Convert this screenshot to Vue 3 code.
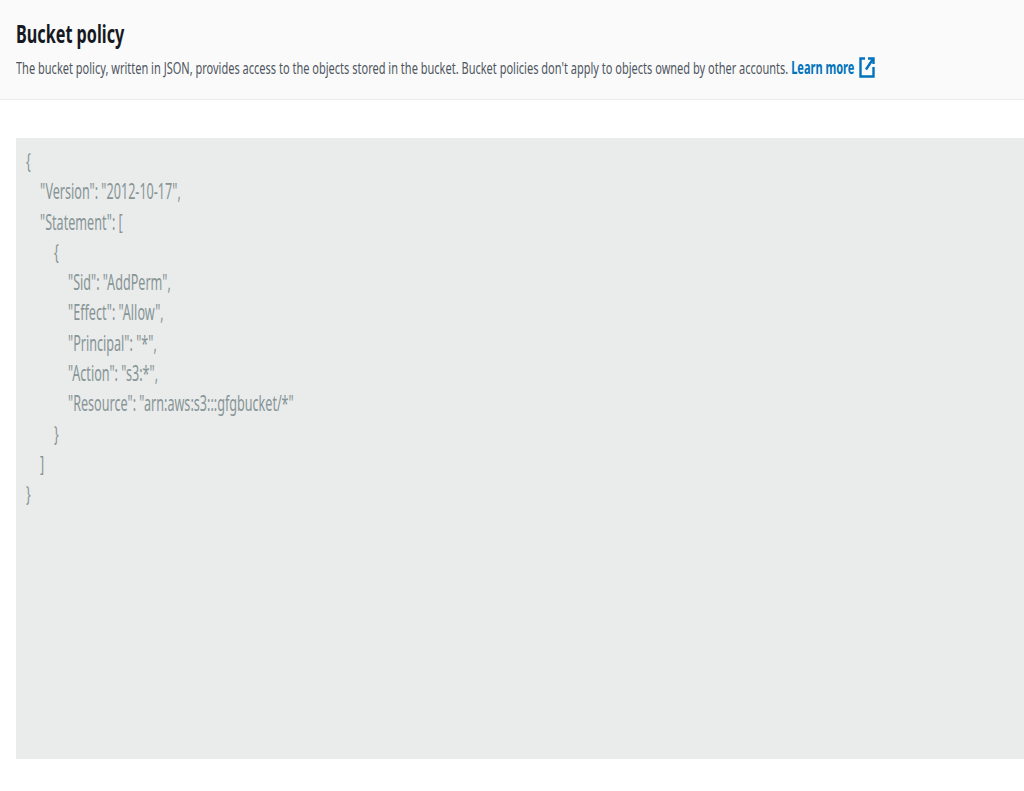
<script setup>
const lines = [
  { t: '{', i: 0 },
  { t: '"Version": "2012-10-17",', i: 1 },
  { t: '"Statement": [', i: 1 },
  { t: '{', i: 2 },
  { t: '"Sid": "AddPerm",', i: 3 },
  { t: '"Effect": "Allow",', i: 3 },
  { t: '"Principal": "*",', i: 3 },
  { t: '"Action": "s3:*",', i: 3 },
  { t: '"Resource": "arn:aws:s3:::gfgbucket/*"', i: 3 },
  { t: '}', i: 2 },
  { t: ']', i: 1 },
  { t: '}', i: 0 }
]
</script>

<template>
  <div class="page">
    <header class="head">
      <h1 class="title">Bucket policy</h1>
      <div class="desc">
        <span class="squeeze">The bucket policy, written in JSON, provides access to the objects stored in the bucket. Bucket policies don't apply to objects owned by other accounts. <a class="more">Learn more</a></span>
        <svg class="ext" viewBox="0 0 16 21" width="16" height="21" fill="none" stroke="#0073bb" stroke-width="2.4">
          <path d="M6 1.5H1.5V19.5H14.5V10" />
          <path d="M9 1.5H14.5V7" />
          <path d="M14 2L7 12.5" />
        </svg>
      </div>
    </header>
    <main class="body">
      <div class="code">
        <div v-for="(l, n) in lines" :key="n" class="line" :class="'ind' + l.i">
          <span class="squeeze">{{ l.t }}</span>
        </div>
      </div>
    </main>
  </div>
</template>

<style scoped>
.page {
  width: 1024px;
  height: 791px;
  overflow: hidden;
  background: #fff;
  font-family: "Noto Sans", sans-serif;
}
.head {
  box-sizing: border-box;
  height: 100px;
  padding: 16px 0 0 16px;
  background: #fafafa;
  border-bottom: 1px solid #eaeded;
}
.title {
  margin: 0;
  height: 34px;
  font-size: 25px;
  line-height: 34px;
  font-weight: 700;
  color: #16191f;
  transform: scaleX(0.648);
  transform-origin: left center;
  white-space: nowrap;
}
.desc {
  position: relative;
  height: 32px;
  margin-top: 2px;
  font-size: 17px;
  line-height: 32px;
  color: #4f565f;
  white-space: nowrap;
}
.squeeze {
  display: inline-block;
  transform: scaleX(0.648);
  transform-origin: left center;
}
.code .squeeze {
  transform: scaleX(0.6);
}
.more {
  color: #0073bb;
  font-weight: 700;
}
.ext {
  position: absolute;
  left: 843px;
  top: 5px;
}
.body {
  padding: 38px 0 0 16px;
}
.code {
  box-sizing: border-box;
  width: 1040px;
  height: 621px;
  padding-top: 8px;
  background: #eaebeb;
  font-size: 21px;
  line-height: 30.3px;
  color: #879596;
  white-space: nowrap;
}
.line {
  height: 30.3px;
}
.ind0 { padding-left: 10px; }
.ind1 { padding-left: 24px; }
.ind2 { padding-left: 38px; }
.ind3 { padding-left: 52px; }
</style>
